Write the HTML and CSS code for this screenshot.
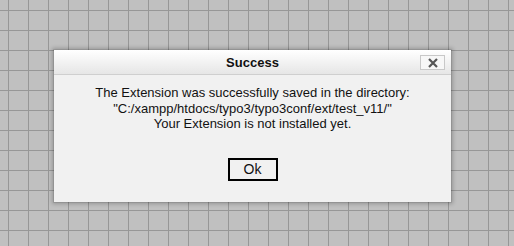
FILE: index.html
```html
<!DOCTYPE html>
<html>
<head>
<meta charset="utf-8">
<link rel="stylesheet" href="styles.css">
</head>
<body>
<div class="canvas">
  <div class="dialog">
    <div class="titlebar">
      <span class="title">Success</span>
      <button class="close" aria-label="close">
        <svg width="12" height="10" viewBox="0 0 12 10"><path d="M2 1 L10 9 M10 1 L2 9" stroke="#555" stroke-width="2.2" fill="none"/></svg>
      </button>
    </div>
    <div class="content">
      <p class="msg">The Extension was successfully saved in the directory:<br>"C:/xampp/htdocs/typo3/typo3conf/ext/test_v11/"<br>Your Extension is not installed yet.</p>
      <button class="ok">Ok</button>
    </div>
  </div>
</div>
</body>
</html>
```
FILE: styles.css
```css
html, body {
  margin: 0;
  padding: 0;
}
body {
  width: 514px;
  height: 246px;
  overflow: hidden;
  background-color: #c0c0c0;
  background-image:
    linear-gradient(to right, #979797 1px, transparent 1px),
    linear-gradient(to bottom, #979797 1px, transparent 1px);
  background-size: 20px 20px;
  background-position: 8px 10px;
  font-family: "Liberation Sans", Arial, sans-serif;
}
.canvas {
  padding: 50px 0 0 54px;
}
.dialog {
  width: 397px;
  height: 152px;
  background: #f1f1f1;
  box-shadow: 0 0 0 1px rgba(0,0,0,0.08), 0 0 4px 2px rgba(0,0,0,0.22);
  display: flex;
  flex-direction: column;
}
.titlebar {
  height: 24px;
  border-bottom: 1px solid #cfcfcf;
  background: linear-gradient(to bottom, #ffffff, #e6e6e6);
  display: flex;
  align-items: center;
  justify-content: center;
  position: relative;
}
.title {
  font-weight: bold;
  font-size: 13px;
  color: #111;
}
.close {
  position: absolute;
  right: 6px;
  top: 5px;
  width: 25px;
  height: 15px;
  padding: 0;
  margin: 0;
  border: 1px solid #c8c8c8;
  background: #f7f7f7;
  display: flex;
  align-items: center;
  justify-content: center;
}
.content {
  flex: 1;
  display: flex;
  flex-direction: column;
  align-items: center;
  padding-top: 10px;
}
.msg {
  margin: 0;
  text-align: center;
  font-size: 13px;
  line-height: 15.5px;
  color: #111;
}
.ok {
  margin-top: 26px;
  width: 50px;
  height: 23px;
  padding: 0;
  border: 2px solid #000;
  background: #f1f1f1;
  font-family: "Liberation Sans", Arial, sans-serif;
  font-size: 14px;
  color: #111;
}
```
